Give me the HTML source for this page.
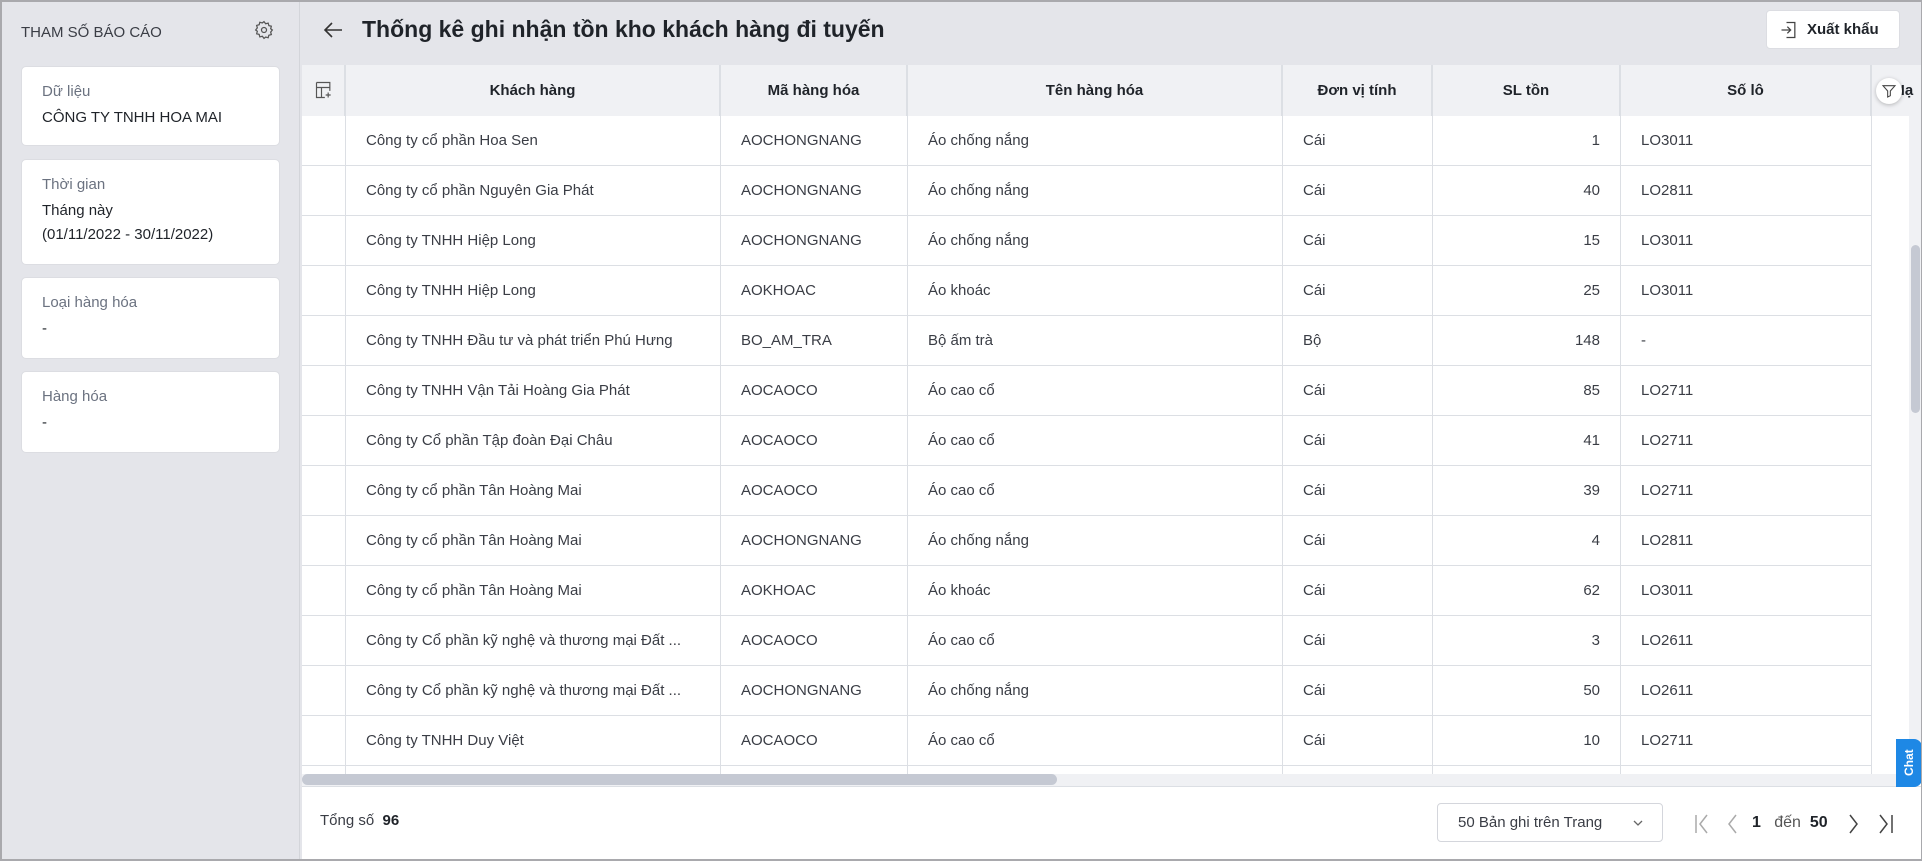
<!DOCTYPE html>
<html><head><meta charset="utf-8"><style>
*{box-sizing:border-box;margin:0;padding:0}
body{width:1922px;height:861px;overflow:hidden;font-family:"Liberation Sans",sans-serif;background:#e4e5ea;position:relative;color:#1f2329}
.frame{position:absolute;left:0;top:0;width:1922px;height:861px;border:2px solid #a9a9ad;border-right:1px solid #a9a9ad;pointer-events:none;z-index:9}
.side{position:absolute;left:0;top:0;width:300px;height:861px;background:#e4e5ea;border-right:1px solid #d3d5da}
.stitle{position:absolute;left:21px;top:24px;font-size:15px;color:#3a3d45}
.card{position:absolute;left:21px;width:259px;background:#fff;border-radius:5px;border:1px solid #dcdde2;padding:16px 20px}
.lab{font-size:15px;color:#6b7280;margin-bottom:6px}
.val{font-size:15px;color:#1f2329;line-height:24px}
.title{position:absolute;left:362px;top:16px;font-size:23px;font-weight:bold;color:#1f2329}
.btn{position:absolute;left:1766px;top:10px;width:134px;height:39px;background:#fff;border-radius:4px;border:1px solid #dcdde2;font-size:15px;font-weight:bold;padding:10px 0 0 40px}
.tbl{position:absolute;left:302px;top:65px;width:1620px;height:721px;background:#fff;overflow:hidden}
.row{position:absolute;left:0;height:50px;width:1570px;border-bottom:1px solid #dcdfe4}
.c{position:absolute;top:0;height:50px;border-right:1px solid #dcdfe4;font-size:15px;line-height:50px;padding:0 20px;white-space:nowrap;overflow:hidden;color:#3a3d45}
.hd .c{background:#f0f1f4;font-weight:bold;text-align:center;color:#1f2329;border-right:2px solid #dcdfe4}
.r{text-align:right}
.foot{position:absolute;left:302px;top:786px;width:1620px;height:75px;background:#fff;border-top:1px solid #dcdfe4}
</style></head><body>
<div class="side">
<div class="stitle">THAM SỐ BÁO CÁO</div>
<svg style="position:absolute;left:254px;top:20px" width="20" height="20" viewBox="0 0 24 24" fill="none" stroke="#555" stroke-width="1.5"><circle cx="12" cy="12" r="3"/><path d="M12 2l2 2.5 3-.8.8 3 3 .8-.8 3L22 12l-2 2.5.8 3-3 .8-.8 3-3-.8L12 22l-2-2.5-3 .8-.8-3-3-.8.8-3L2 12l2-2.5-.8-3 3-.8.8-3 3 .8z"/></svg>
<div class="card" style="top:66px;height:80px"><div class="lab">Dữ liệu</div><div class="val">CÔNG TY TNHH HOA MAI</div></div>
<div class="card" style="top:159px;height:106px"><div class="lab">Thời gian</div><div class="val">Tháng này<br>(01/11/2022 - 30/11/2022)</div></div>
<div class="card" style="top:277px;height:82px"><div class="lab">Loại hàng hóa</div><div class="val">-</div></div>
<div class="card" style="top:371px;height:82px"><div class="lab">Hàng hóa</div><div class="val">-</div></div>
</div>
<svg style="position:absolute;left:322px;top:18px" width="24" height="24" viewBox="0 0 24 24" fill="none" stroke="#333" stroke-width="1.6"><path d="M20 12H4M10 5l-7 7 7 7"/></svg>
<div class="title">Thống kê ghi nhận tồn kho khách hàng đi tuyến</div>
<div class="btn"><svg style="position:absolute;left:12px;top:9px" width="20" height="20" viewBox="0 0 24 24" fill="none" stroke="#444" stroke-width="1.5"><path d="M9 3h10v18H9M3 12h11M10 8l4 4-4 4"/></svg>Xuất khẩu</div>
<div class="tbl">
<div class="row hd" style="top:0;height:51px"><div class="c" style="left:0;width:44px;height:51px;line-height:51px"></div><div class="c" style="left:44px;width:375px;height:51px;line-height:51px">Khách hàng</div><div class="c" style="left:419px;width:187px;height:51px;line-height:51px">Mã hàng hóa</div><div class="c" style="left:606px;width:375px;height:51px;line-height:51px">Tên hàng hóa</div><div class="c" style="left:981px;width:150px;height:51px;line-height:51px">Đơn vị tính</div><div class="c" style="left:1131px;width:188px;height:51px;line-height:51px">SL tồn</div><div class="c" style="left:1319px;width:251px;height:51px;line-height:51px">Số lô</div><div class="c" style="left:1570px;width:60px;height:51px;line-height:51px;text-align:left;padding-left:22px">Hạ</div></div>
<svg style="position:absolute;left:12px;top:15px" width="20" height="20" viewBox="0 0 24 24" fill="none" stroke="#555" stroke-width="1.4"><path d="M3 3h16v10M3 3v18h10M3 9h16M9 9v12M17 15v6M14 18h6"/></svg>
<div style="position:absolute;left:1574px;top:13px;width:26px;height:26px;border-radius:13px;background:#fff;box-shadow:0 1px 4px rgba(0,0,0,.25)"><svg style="margin:5px" width="16" height="16" viewBox="0 0 24 24" fill="none" stroke="#444" stroke-width="1.6"><path d="M3 4h18l-7 8v7l-4 2v-9z"/></svg></div>
<div id="rows"></div>
<div style="position:absolute;left:0;top:709px;width:1605px;height:12px;background:#f0f1f4"><div style="width:755px;height:11px;background:#c5c9d3;border-radius:6px"></div></div>
<div style="position:absolute;left:1607px;top:40px;width:13px;height:669px;background:#f0f1f4"><div style="margin:140px 2px;width:9px;height:168px;background:#c5c9d3;border-radius:5px"></div></div>
</div>
<div class="foot">
<div style="position:absolute;left:18px;top:25px;font-size:15px;color:#3a3d45">Tổng số &nbsp;<b style="color:#1f2329">96</b></div>
<div style="position:absolute;left:1135px;top:16px;width:226px;height:39px;border:1px solid #d4d6dc;border-radius:4px;font-size:15px;padding:10px 0 0 20px;color:#3a3d45">50 Bản ghi trên Trang<svg style="position:absolute;right:18px;top:14px" width="12" height="10" viewBox="0 0 12 10" fill="none" stroke="#666" stroke-width="1.3"><path d="M2 3l4 4 4-4"/></svg></div>
<svg style="position:absolute;left:1390px;top:26px" width="20" height="22" viewBox="0 0 20 22" fill="none" stroke="#aaa" stroke-width="1.5"><path d="M4 2v18M15 2l-7 9 7 9"/></svg>
<svg style="position:absolute;left:1420px;top:26px" width="20" height="22" viewBox="0 0 20 22" fill="none" stroke="#aaa" stroke-width="1.5"><path d="M14 2l-7 9 7 9"/></svg>
<div style="position:absolute;left:1450px;top:27px;font-size:16px;color:#1f2329;white-space:nowrap"><b>1</b> &nbsp;&nbsp;<span style="color:#555">đến</span> &nbsp;<b>50</b></div>
<svg style="position:absolute;left:1542px;top:26px" width="20" height="22" viewBox="0 0 20 22" fill="none" stroke="#444" stroke-width="1.5"><path d="M6 2l7 9-7 9"/></svg>
<svg style="position:absolute;left:1574px;top:26px" width="20" height="22" viewBox="0 0 20 22" fill="none" stroke="#444" stroke-width="1.5"><path d="M4 2l7 9-7 9M16 2v18"/></svg>
</div>
<div style="position:absolute;left:1896px;top:739px;width:26px;height:48px;background:#1e88e5;border-radius:8px 0 0 8px;color:#fff;font-size:12px;font-weight:bold;writing-mode:vertical-rl;transform:rotate(180deg);text-align:center;line-height:26px">Chat</div>
<div class="frame"></div>
<script>
var d=[["Công ty cổ phần Hoa Sen","AOCHONGNANG","Áo chống nắng","Cái","1","LO3011"],["Công ty cổ phần Nguyên Gia Phát","AOCHONGNANG","Áo chống nắng","Cái","40","LO2811"],["Công ty TNHH Hiệp Long","AOCHONGNANG","Áo chống nắng","Cái","15","LO3011"],["Công ty TNHH Hiệp Long","AOKHOAC","Áo khoác","Cái","25","LO3011"],["Công ty TNHH Đầu tư và phát triển Phú Hưng","BO_AM_TRA","Bộ ấm trà","Bộ","148","-"],["Công ty TNHH Vận Tải Hoàng Gia Phát","AOCAOCO","Áo cao cổ","Cái","85","LO2711"],["Công ty Cổ phần Tập đoàn Đại Châu","AOCAOCO","Áo cao cổ","Cái","41","LO2711"],["Công ty cổ phần Tân Hoàng Mai","AOCAOCO","Áo cao cổ","Cái","39","LO2711"],["Công ty cổ phần Tân Hoàng Mai","AOCHONGNANG","Áo chống nắng","Cái","4","LO2811"],["Công ty cổ phần Tân Hoàng Mai","AOKHOAC","Áo khoác","Cái","62","LO3011"],["Công ty Cổ phần kỹ nghệ và thương mại Đất ...","AOCAOCO","Áo cao cổ","Cái","3","LO2611"],["Công ty Cổ phần kỹ nghệ và thương mại Đất ...","AOCHONGNANG","Áo chống nắng","Cái","50","LO2611"],["Công ty TNHH Duy Việt","AOCAOCO","Áo cao cổ","Cái","10","LO2711"],["","","","","",""]];
var L=[0,44,419,606,981,1131,1319,1570],h="";
d.forEach(function(r,i){h+='<div class="row" style="top:'+(51+i*50)+'px">';h+='<div class="c" style="left:0;width:44px"></div>';for(var k=0;k<6;k++)h+='<div class="c'+(k==4?' r':'')+'" style="left:'+L[k+1]+'px;width:'+(L[k+2]-L[k+1])+'px">'+r[k]+'</div>';h+='<div class="c" style="left:1570px;width:40px"></div></div>';});
document.getElementById("rows").innerHTML=h;
</script>
</body></html>
